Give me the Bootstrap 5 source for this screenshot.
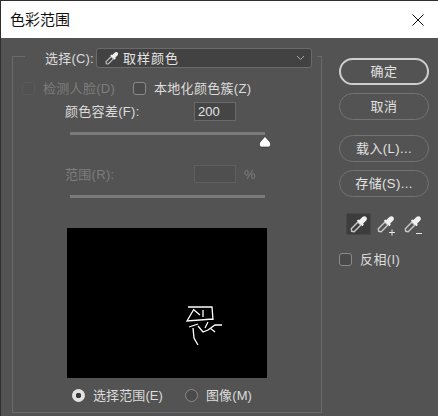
<!DOCTYPE html>
<html lang="zh-CN">
<head>
  <meta charset="UTF-8" />
  <title>色彩范围</title>
  <link href="https://cdn.jsdelivr.net/npm/bootstrap@5.3.2/dist/css/bootstrap.min.css" rel="stylesheet" />
  <style>
    html, body { height: 100%; }
    body {
      background: #535353; color: #dcdcdc; overflow: hidden;
      font-family: "Liberation Sans", "Noto Sans CJK SC", sans-serif; font-size: 13px; line-height: 1;
      border-top: 1px solid #2e2e2e; border-left: 1px solid #2e2e2e;
    }
    .win-title { height: 37px; margin-left: -1px; background: #fff; color: #111; font-size: 15px; padding: 0 14px 0 10px; }
    .win-close { width: 12px; height: 12px; display: block; }
    .pick-main { padding-left: 11px; gap: 17px; }
    .pick-frame { width: 310px; margin-top: 18px; height: 357px; border: 1px solid #6a6a6a; border-top: 0; }
    .pick-seg { width: 12px; border-top: 1px solid #6a6a6a; }
    .pick-seg-end { width: 4px; margin-left: auto; }
    .pick-head { height: 12px; }
    .pick-headin { height: 20px; margin-top: -8px; width: 292px; padding-left: 20px; }
    .pick-headlbl { width: 51px; letter-spacing: .2px; }
    .pick-select { width: 216px; height: 20px; background: #424242; border: 1px solid #6a6a6a; border-radius: 3px; padding: 0 6px 0 8px; letter-spacing: 1px; color: #e4e4e4; }
    .pick-check.form-check-input { width: 13px; height: 13px; margin: 0; flex: none; background-color: #4a4a4a; border: 1px solid #8a8a8a; border-radius: 3px; }
    .pick-check.off { background-color: #525252; border-color: #626262; }
    .pick-round.form-check-input { width: 13px; height: 13px; margin: 0; flex: none; background-color: #4a4a4a; border: 1px solid #8a8a8a; }
    .pick-round.form-check-input:checked { background-color: #e2e2e2; border-color: #e2e2e2; background-image: radial-gradient(circle, #3a3a3a 0 2.5px, #e2e2e2 3px); }
    .txt-off { color: #7d7d7d; }
    .pick-r1 { height: 14px; margin-top: 13px; padding-left: 9px; letter-spacing: .3px; }
    .pick-r2 { height: 19px; margin-top: 7px; padding-left: 52px; letter-spacing: .3px; }
    .pick-lbl { width: 129px; }
    .pick-num { width: 42px; height: 100%; background: #454545; border: 1px solid #6a6a6a; padding: 0 0 0 3px; letter-spacing: 0; color: #e4e4e4; display: flex; align-items: center; }
    .pick-num.off { background: #4f4f4f; border-color: #5f5f5f; }
    .pick-track { width: 195px; height: 3px; margin-left: 57px; background: #7a7a7a; position: relative; }
    .pick-thumb { position: absolute; right: -6px; top: 4px; display: block; }
    .pick-preview { width: 200px; height: 150px; margin: 30px 0 0 54px; background: #000; display: block; }
    .pick-r3 { height: 14px; margin-top: 10px; padding-left: 59px; letter-spacing: .1px; }
    .pick-side { width: 90px; margin-top: 20px; }
    .pick-btn.btn { width: 90px; height: 27px; padding: 0; border: 1px solid #737373; background: transparent; color: #e2e2e2; font-size: 13px; line-height: 1; letter-spacing: .4px; border-radius: 13.5px; display: block; }
    .pick-btn.main { border: 2px solid #cfcfcf; }
    .pick-tool { width: 25px; height: 22px; }
    .pick-tool.on { background: #3c3c3c; border: 1px solid #474747; border-radius: 2px; }
  </style>
</head>
<body>
  <div class="win-title d-flex align-items-center justify-content-between">
    <span>色彩范围</span>
    <svg class="win-close" viewBox="0 0 12 12"><path d="M.5.5l11 11M11.5.5l-11 11" stroke="#111" fill="none" /></svg>
  </div>

  <svg width="0" height="0" class="position-absolute">
    <symbol id="dropper" viewBox="0 0 18 18">
      <path d="M1.700 16.300L1.300 13.800 8 7.100 10.900 10 4.200 16.700z" fill="none" stroke="#c8c8c8" stroke-width="1.400" />
      <path d="M6.800 5.700l1.500-1.100 1.100.5 3-3c1.200-1.100 3-1.100 3.800-.1s1 2.600 0 3.600l-3 3 .5 1.100-1.100 1.500z" fill="#f0f0f0" />
    </symbol>
  </svg>

  <div class="pick-main d-flex align-items-start">
    <div class="pick-frame">
      <div class="pick-head d-flex">
        <span class="pick-seg"></span>
        <div class="pick-headin d-flex align-items-center">
          <span class="pick-headlbl">选择(C):</span>
          <div class="pick-select d-flex align-items-center">
            <svg width="14" height="14" class="me-1 flex-none"><use href="#dropper" /></svg>
            <span>取样颜色</span>
            <svg class="ms-auto" width="9" height="6" viewBox="0 0 9 6"><path d="M1 1l3.500 3.500L8 1" stroke="#a8a8a8" fill="none" /></svg>
          </div>
        </div>
        <span class="pick-seg pick-seg-end"></span>
      </div>

      <div class="pick-r1 d-flex align-items-center">
        <input class="form-check-input pick-check off" type="checkbox" disabled />
        <span class="txt-off ms-2" style="width:90px">检测人脸(D)</span>
        <input class="form-check-input pick-check" type="checkbox" />
        <span class="ms-2">本地化颜色簇(Z)</span>
      </div>

      <div class="pick-r2 d-flex align-items-center">
        <span class="pick-lbl">颜色容差(F):</span>
        <div class="pick-num">200</div>
      </div>
      <div class="pick-track" style="margin-top:11px">
        <svg class="pick-thumb" width="12" height="12" viewBox="0 0 12 12"><path d="M6 .5L10 5c1 1 1.500 2 1.500 3.500 0 1.500-1 2.500-2 2.500h-7c-1 0-2-1-2-2.500C.5 7 1 6 2 5z" fill="#fff" stroke="#222" stroke-width=".6" /></svg>
      </div>

      <div class="pick-r2 d-flex align-items-center txt-off" style="height:18px;margin-top:30px">
        <span class="pick-lbl">范围(R):</span>
        <div class="pick-num off"></div>
        <span class="ms-2">%</span>
      </div>
      <div class="pick-track" style="margin-top:12px"></div>

      <svg class="pick-preview" viewBox="0 0 200 150" fill="none" stroke="#fff" stroke-width="1.300">
        <path d="M121 79h24l1 13M127 81l-7 12 26-2" />
        <path d="M127 82l6 5M136 82v7" />
        <path d="M122 99l9-3M126 100l1 10 4 7M131 98l5 6 5-2 7-5h7M141 94l-3 6M143 100l5 4" />
      </svg>

      <div class="pick-r3 d-flex align-items-center">
        <input class="form-check-input pick-round" type="radio" name="view" checked />
        <span class="ms-2" style="width:92px">选择范围(E)</span>
        <input class="form-check-input pick-round" type="radio" name="view" />
        <span class="ms-2">图像(M)</span>
      </div>
    </div>

    <div class="pick-side">
      <button class="btn pick-btn main" type="button">确定</button>
      <button class="btn pick-btn" type="button" style="margin-top:8px">取消</button>
      <button class="btn pick-btn" type="button" style="margin-top:15px">载入(L)...</button>
      <button class="btn pick-btn" type="button" style="margin-top:8px">存储(S)...</button>

      <div class="d-flex align-items-center" style="margin:16px 0 0 7px;gap:2px">
        <div class="pick-tool on d-flex align-items-center justify-content-center">
          <svg width="18" height="18"><use href="#dropper" /></svg>
        </div>
        <div class="pick-tool d-flex align-items-center justify-content-center position-relative">
          <svg width="18" height="18"><use href="#dropper" /></svg>
          <svg class="position-absolute" style="right:2px;bottom:-1px" width="7" height="7"><path d="M0 3.500h6M3 .5v6" stroke="#e6e6e6" /></svg>
        </div>
        <div class="pick-tool d-flex align-items-center justify-content-center position-relative">
          <svg width="18" height="18"><use href="#dropper" /></svg>
          <svg class="position-absolute" style="right:2px;bottom:-1px" width="7" height="7"><path d="M0 4.500h6" stroke="#e6e6e6" /></svg>
        </div>
      </div>

      <div class="d-flex align-items-center" style="margin-top:18px;height:13px">
        <input class="form-check-input pick-check" type="checkbox" />
        <span class="ms-2" style="letter-spacing:.4px">反相(I)</span>
      </div>
    </div>
  </div>

  <script src="https://cdn.jsdelivr.net/npm/bootstrap@5.3.2/dist/js/bootstrap.bundle.min.js"></script>
</body>
</html>
